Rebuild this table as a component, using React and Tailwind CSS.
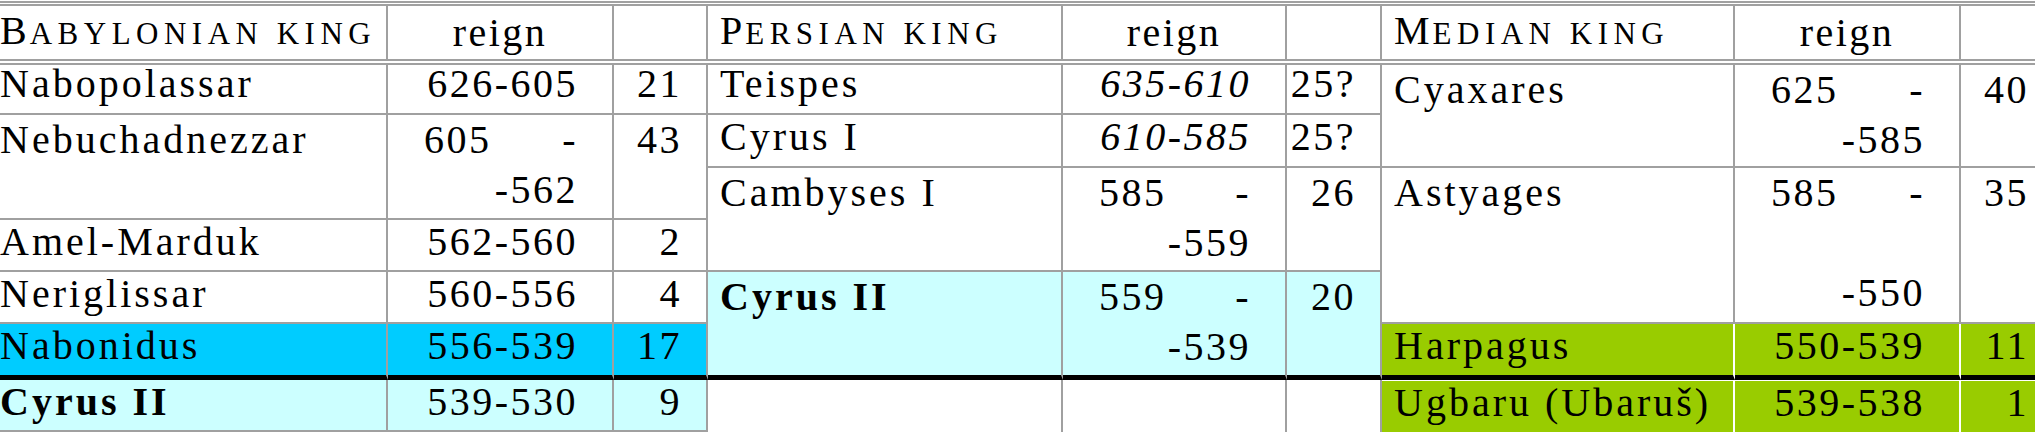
import React from 'react';

const LINE = 'border-[#a0a0a0]';

// shared cell classes (right border + alignment); bottom borders added per row
const nameB = 'border-r-2 border-r-[#a0a0a0] pl-[14px] text-left tracking-[3px]';
const name = 'border-r-2 border-r-[#a0a0a0] pl-[12px] text-left tracking-[3px]';
const reign = 'border-r-2 border-r-[#a0a0a0] pl-[36px] pr-[34px] text-right';
const yrs = 'border-r-2 border-r-[#a0a0a0] pr-[24px] text-right';
const headReign = 'border-r-2 border-r-[#a0a0a0] text-center';
const nameW = 'border-r-2 border-r-white pl-[12px] text-left tracking-[3px]';
const reignW = 'border-r-2 border-r-white pl-[36px] pr-[34px] text-right';
const yrsW = 'border-r-2 border-r-white pr-[24px] text-right';

const bot = 'border-b-2 border-b-[#a0a0a0]';
const black = 'border-b-[5px] border-b-black';
const top = 'border-t-2 border-t-[#a0a0a0]';
// single-line cells sit a little high in their rows
const one = 'align-top leading-[44px]';
const first = 'align-top leading-[38px]';

// "605 -" on the first line, "-562" pushed right on the last
function Wrapped({ from, to, gap = false }) {
  return (
    <div className="flex flex-col">
      <div className="flex justify-between">
        <span>{from}</span>
        <span>-</span>
      </div>
      {gap && <div>&nbsp;</div>}
      <div className="text-right">{to}</div>
    </div>
  );
}

function Head({ cap, rest }) {
  return (
    <span>
      {cap}
      <span className="text-[31px] tracking-[5.5px]">{rest}</span>
    </span>
  );
}

export default function App() {
  const widths = [
    'w-[402px]', 'w-[226px]', 'w-[94px]',
    'w-[355px]', 'w-[224px]', 'w-[95px]',
    'w-[353px]', 'w-[226px]', 'w-[94px]',
  ];

  return (
    <div className="w-[2035px] h-[434px] overflow-hidden bg-white text-black font-['Liberation_Serif',serif] text-[40px] leading-[50px] tracking-[2.5px]">
      <div className="-ml-[14px] w-[2069px] pt-[1px]">
        <div className={`h-[2px] border-t-2 ${LINE}`} />
        <table className="mt-[1px] w-[2069px] table-fixed border-separate border-spacing-0">
          <colgroup>
            {widths.map((w, i) => (
              <col key={i} className={w} />
            ))}
          </colgroup>
          <tbody>
            {/* header */}
            <tr className="h-[55px]">
              <td className={`${nameB} ${top} ${bot}`}><Head cap="B" rest="ABYLONIAN KING" /></td>
              <td className={`${headReign} ${top} ${bot}`}>reign</td>
              <td className={`${yrs} ${top} ${bot}`}></td>
              <td className={`${name} ${top} ${bot}`}><Head cap="P" rest="ERSIAN KING" /></td>
              <td className={`${headReign} ${top} ${bot}`}>reign</td>
              <td className={`${yrs} ${top} ${bot}`}></td>
              <td className={`${name} ${top} ${bot}`}><Head cap="M" rest="EDIAN KING" /></td>
              <td className={`${headReign} ${top} ${bot}`}>reign</td>
              <td className={`${yrs} ${top} ${bot}`}></td>
            </tr>
            <tr className="h-[2px]">
              <td colSpan={9} className="p-0 leading-[2px]"></td>
            </tr>

            {/* 1 */}
            <tr className="h-[52px]">
              <td className={`${nameB} ${top} ${bot} ${first}`}>Nabopolassar</td>
              <td className={`${reign} ${top} ${bot} ${first}`}>626-605</td>
              <td className={`${yrs} ${top} ${bot} ${first}`}>21</td>
              <td className={`${name} ${top} ${bot} ${first}`}>Teispes</td>
              <td className={`${reign} ${top} ${bot} ${first} italic`}>635-610</td>
              <td className={`${yrs} ${top} ${bot} ${first}`}>25?</td>
              <td rowSpan={2} className={`${name} ${top} ${bot} align-top`}>Cyaxares</td>
              <td rowSpan={2} className={`${reign} ${top} ${bot} align-top`}><Wrapped from="625" to="-585" /></td>
              <td rowSpan={2} className={`${yrs} ${top} ${bot} align-top`}>40</td>
            </tr>

            {/* 2 */}
            <tr className="h-[53px]">
              <td rowSpan={2} className={`${nameB} ${bot} align-top`}>Nebuchadnezzar</td>
              <td rowSpan={2} className={`${reign} ${bot} align-top`}><Wrapped from="605" to="-562" /></td>
              <td rowSpan={2} className={`${yrs} ${bot} align-top`}>43</td>
              <td className={`${name} ${bot} ${one}`}>Cyrus I</td>
              <td className={`${reign} ${bot} ${one} italic`}>610-585</td>
              <td className={`${yrs} ${bot} ${one}`}>25?</td>
            </tr>

            {/* 3 */}
            <tr className="h-[52px]">
              <td rowSpan={2} className={`${name} ${bot} align-top`}>Cambyses I</td>
              <td rowSpan={2} className={`${reign} ${bot} align-top`}><Wrapped from="585" to="-559" /></td>
              <td rowSpan={2} className={`${yrs} ${bot} align-top`}>26</td>
              <td rowSpan={3} className={`${name} ${bot} align-top`}>Astyages</td>
              <td rowSpan={3} className={`${reign} ${bot} align-top`}><Wrapped from="585" to="-550" gap /></td>
              <td rowSpan={3} className={`${yrs} ${bot} align-top`}>35</td>
            </tr>

            {/* 4 */}
            <tr className="h-[52px]">
              <td className={`${nameB} ${bot} ${one}`}>Amel-Marduk</td>
              <td className={`${reign} ${bot} ${one}`}>562-560</td>
              <td className={`${yrs} ${bot} ${one}`}>2</td>
            </tr>

            {/* 5 */}
            <tr className="h-[52px]">
              <td className={`${nameB} ${bot} ${one}`}>Neriglissar</td>
              <td className={`${reign} ${bot} ${one}`}>560-556</td>
              <td className={`${yrs} ${bot} ${one}`}>4</td>
              <td rowSpan={2} className={`${name} ${black} align-top bg-[#ccffff] font-bold`}>Cyrus II</td>
              <td rowSpan={2} className={`${reign} ${black} align-top bg-[#ccffff]`}><Wrapped from="559" to="-539" /></td>
              <td rowSpan={2} className={`${yrs} ${black} align-top bg-[#ccffff]`}>20</td>
            </tr>

            {/* 6 */}
            <tr className="h-[56px]">
              <td className={`${nameB} ${black} ${one} bg-[#00ccff]`}>Nabonidus</td>
              <td className={`${reign} ${black} ${one} bg-[#00ccff]`}>556-539</td>
              <td className={`${yrs} ${black} ${one} bg-[#00ccff]`}>17</td>
              <td className={`${nameW} ${black} ${one} bg-[#99cc00]`}>Harpagus</td>
              <td className={`${reignW} ${black} ${one} bg-[#99cc00]`}>550-539</td>
              <td className={`${yrsW} ${black} ${one} bg-[#99cc00]`}>11</td>
            </tr>

            {/* 7 */}
            <tr className="h-[52px]">
              <td className={`${nameB} ${bot} ${one} bg-[#ccffff] font-bold`}>Cyrus II</td>
              <td className={`${reign} ${bot} ${one} bg-[#ccffff]`}>539-530</td>
              <td className={`${yrs} ${bot} ${one} bg-[#ccffff]`}>9</td>
              <td className={name}></td>
              <td className={reign}></td>
              <td className={yrs}></td>
              <td className={`${nameW} ${one} border-t border-t-white bg-[#99cc00]`}>Ugbaru (Ubaruš)</td>
              <td className={`${reignW} ${one} border-t border-t-white bg-[#99cc00]`}>539-538</td>
              <td className={`${yrsW} ${one} border-t border-t-white bg-[#99cc00]`}>1</td>
            </tr>
          </tbody>
        </table>
      </div>
    </div>
  );
}
